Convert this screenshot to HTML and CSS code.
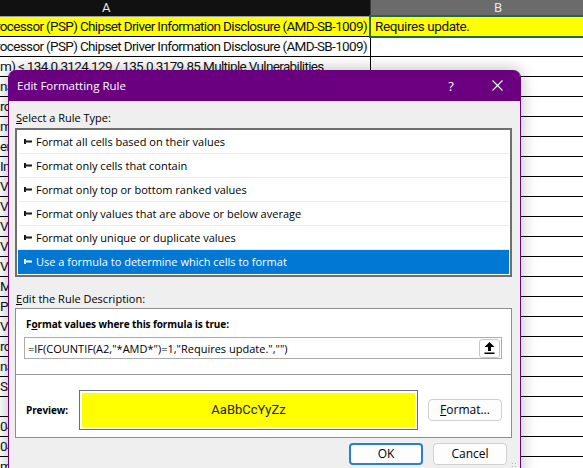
FILE: index.html
```
<!DOCTYPE html>
<html lang="en">
<head>
  <meta charset="UTF-8">
  <title>Edit Formatting Rule</title>
  <link rel="stylesheet" href="styles.css">
</head>
<body>
  <div class="sheet">
    <div class="colhead">
      <div class="hd-a">A</div>
      <div class="hd-b">B</div>
    </div>
    <div class="row hit">
      <div class="ca cut">rocessor (PSP) Chipset Driver Information Disclosure (AMD-SB-1009)</div>
      <div class="cb sel">Requires update.</div>
    </div>
    <div class="row">
      <div class="ca cut">rocessor (PSP) Chipset Driver Information Disclosure (AMD-SB-1009)</div>
      <div class="cb"></div>
    </div>
    <div class="row">
      <div class="ca">m) &lt; 134.0.3124.129 / 135.0.3179.85 Multiple Vulnerabilities</div>
      <div class="cb"></div>
    </div>
    <div class="row"><div class="ca">nal Code Execution</div><div class="cb"></div></div>
    <div class="row"><div class="ca">rocessor Vulnerability</div><div class="cb"></div></div>
    <div class="row"><div class="ca">m Update</div><div class="cb"></div></div>
    <div class="row"><div class="ca">ersion Check</div><div class="cb"></div></div>
    <div class="row"><div class="ca">Improper Input Validation</div><div class="cb"></div></div>
    <div class="row"><div class="ca">Vulnerability</div><div class="cb"></div></div>
    <div class="row"><div class="ca">Vulnerability</div><div class="cb"></div></div>
    <div class="row"><div class="ca">Vulnerability</div><div class="cb"></div></div>
    <div class="row"><div class="ca">Vulnerability</div><div class="cb"></div></div>
    <div class="row"><div class="ca">Vulnerability</div><div class="cb"></div></div>
    <div class="row"><div class="ca">Multiple Vulnerabilities</div><div class="cb"></div></div>
    <div class="row"><div class="ca">PSP Firmware</div><div class="cb"></div></div>
    <div class="row"><div class="ca">Vulnerabilities</div><div class="cb"></div></div>
    <div class="row"><div class="ca">rocessor</div><div class="cb"></div></div>
    <div class="row"><div class="ca">nal Disclosure</div><div class="cb"></div></div>
    <div class="row"><div class="ca">SMB Server</div><div class="cb"></div></div>
    <div class="row"><div class="ca"></div><div class="cb"></div></div>
    <div class="row"><div class="ca">04 Update</div><div class="cb"></div></div>
    <div class="row"><div class="ca">04 Update</div><div class="cb"></div></div>
    <div class="row"><div class="ca">m Update</div><div class="cb"></div></div>
  </div>

  <div class="dialog">
    <div class="titlebar">
      <span class="title">Edit Formatting Rule</span>
      <span class="tb-btn help">?</span>
      <span class="tb-btn close">
        <svg width="11" height="11" viewBox="0 0 11 11"><path d="M0.5 0.5L10.5 10.5M10.5 0.5L0.5 10.5" stroke="#fff" stroke-width="1.1" fill="none"/></svg>
      </span>
    </div>

    <div class="dlg-body">
      <div class="label"><u>S</u>elect a Rule Type:</div>
      <ul class="rules">
        <li><svg class="mark" width="8" height="5" viewBox="0 0 8 5"><path d="M0 0h2v1.5h6v2H2V5H0z"/></svg>Format all cells based on their values</li>
        <li><svg class="mark" width="8" height="5" viewBox="0 0 8 5"><path d="M0 0h2v1.5h6v2H2V5H0z"/></svg>Format only cells that contain</li>
        <li><svg class="mark" width="8" height="5" viewBox="0 0 8 5"><path d="M0 0h2v1.5h6v2H2V5H0z"/></svg>Format only top or bottom ranked values</li>
        <li><svg class="mark" width="8" height="5" viewBox="0 0 8 5"><path d="M0 0h2v1.5h6v2H2V5H0z"/></svg>Format only values that are above or below average</li>
        <li><svg class="mark" width="8" height="5" viewBox="0 0 8 5"><path d="M0 0h2v1.5h6v2H2V5H0z"/></svg>Format only unique or duplicate values</li>
        <li class="current"><svg class="mark" width="8" height="5" viewBox="0 0 8 5"><path d="M0 0h2v1.5h6v2H2V5H0z"/></svg>Use a formula to determine which cells to format</li>
      </ul>

      <div class="label label-edit"><u>E</u>dit the Rule Description:</div>
      <div class="desc">
        <div class="desc-top">
          <div class="bold">F<u>o</u>rmat values where this formula is true:</div>
          <div class="formula">
            <span class="formula-text">=IF(COUNTIF(A2,"*AMD*")=1,"Requires update.","")</span>
            <span class="ref-btn">
              <svg width="11" height="12" viewBox="0 0 11 12"><path d="M5.5 0L10.5 5H7V9H4V5H0.5Z M0.5 10.5h10V12h-10z" fill="#000"/></svg>
            </span>
          </div>
        </div>
        <div class="desc-bottom">
          <span class="bold pv-label">Preview:</span>
          <div class="preview"><div class="swatch">AaBbCcYyZz</div></div>
          <span class="btn fmt-btn"><u>F</u>ormat...</span>
        </div>
      </div>

      <div class="actions">
        <span class="btn ok">OK</span>
        <span class="btn">Cancel</span>
      </div>
    </div>
    <div class="grip"></div>
  </div>
</body>
</html>
```

FILE: styles.css
```
* {
  margin: 0;
  padding: 0;
  box-sizing: border-box;
}
body {
  position: relative;
  width: 583px;
  height: 468px;
  overflow: hidden;
  background: #fff;
  font-family: Roboto, "Liberation Sans", sans-serif;
}

/* spreadsheet behind the dialog */
.sheet {
  font-size: 13.5px;
  letter-spacing: -0.65px;
  color: #111;
}
.colhead {
  display: flex;
  height: 17px;
  border-bottom: 1px solid #9c9c9c;
  color: #e8e8e8;
  font-size: 13px;
  letter-spacing: 0;
  line-height: 16px;
}
.hd-a {
  width: 371px;
  padding-left: 102px;
  background: #111;
  border-right: 1px solid #3a3a3a;
}
.hd-b {
  flex: 1;
  padding-left: 123px;
  background: #6b6b6b;
}
.row {
  display: flex;
  height: 20px;
  border-bottom: 1px solid #000;
  line-height: 19px;
}
.ca {
  width: 371px;
  border-right: 1px solid #000;
  white-space: nowrap;
  overflow: hidden;
}
.ca.cut {
  text-indent: -4px;
}
.cb {
  flex: 1;
  padding-left: 4px;
  white-space: nowrap;
  letter-spacing: -0.4px;
}
.row.hit .ca,
.row.hit .cb {
  background: #ffff00;
}
.cb.sel {
  position: relative;
}
.cb.sel:after {
  content: "";
  position: absolute;
  left: -2px;
  top: -2px;
  right: -2px;
  bottom: -2px;
  border: 2px solid #1f6b40;
}

/* dialog */
.dialog {
  position: absolute;
  left: 8px;
  top: 70px;
  width: 513px;
  height: 410px;
  background: #efefef;
  border-left: 1px solid #6a0080;
  border-right: 1px solid #6a0080;
  border-radius: 8px 8px 0 0;
  box-shadow: 0 0 16px rgba(0, 0, 0, 0.28);
  font-family: "Open Sans", "Noto Sans", sans-serif;
  font-size: 11px;
  color: #000;
}
.titlebar {
  display: flex;
  align-items: center;
  height: 31px;
  background: #6a0080;
  border-radius: 7px 7px 0 0;
  color: #fff;
}
.title {
  padding-left: 8px;
  font-size: 11.5px;
  flex: 1;
}
.tb-btn {
  width: 46px;
  text-align: center;
  font-size: 13px;
}
.tb-btn svg {
  display: block;
  margin: 0 auto;
}
.dlg-body {
  padding: 9px 8px 0 6px;
}
.label {
  line-height: 16px;
  padding-left: 1px;
}
.label-edit {
  margin-top: 14px;
}
.rules {
  list-style: none;
  margin-top: 2px;
  width: 497px;
  height: 149px;
  padding: 0 1px;
  background: #fff;
  border: 2px solid #6f6f6f;
}
.rules li {
  display: flex;
  align-items: center;
  height: 24px;
  padding-left: 6px;
  border-bottom: 1px solid #ececec;
  white-space: nowrap;
}
.rules li .mark {
  margin-right: 4px;
  fill: #1a1a1a;
}
.rules li.current {
  background: #0078d4;
  color: #fff;
  border-bottom-color: #0078d4;
}
.rules li.current .mark {
  fill: #fff;
}

.desc {
  margin-top: 1px;
  width: 497px;
  height: 130px;
  background: #fff;
  border: 1px solid #8e8e8e;
}
.bold {
  font-weight: bold;
  font-size: 10px;
  letter-spacing: -0.1px;
}
.desc-top {
  padding: 7px 9px 15px 8px;
  border-bottom: 1px solid #9a9a9a;
}
.desc-top .bold {
  line-height: 16px;
  padding-left: 2px;
}
.formula {
  display: flex;
  align-items: center;
  margin-top: 5px;
  height: 22px;
  padding: 0 1px 0 3px;
  border: 1px solid #ababab;
  font-size: 11px;
}
.formula-text {
  flex: 1;
}
.ref-btn {
  display: flex;
  align-items: center;
  justify-content: center;
  width: 21px;
  height: 19px;
  background: #fff;
  border: 1px solid #c8c8c8;
  border-radius: 3px;
}
.desc-bottom {
  display: flex;
  align-items: center;
  padding: 15px 0 0 10px;
}
.pv-label {
  width: 53px;
}
.preview {
  width: 339px;
  height: 40px;
  padding: 2px;
  background: #fff;
  border: 1px solid #6e6e6e;
}
.swatch {
  height: 100%;
  background: #ffff00;
  text-align: center;
  line-height: 34px;
  font-family: Roboto, sans-serif;
  font-size: 13px;
  color: #222;
}
.btn {
  display: inline-block;
  width: 74px;
  height: 22px;
  line-height: 20px;
  text-align: center;
  background: #fdfdfd;
  border: 1px solid #d0d0d0;
  border-radius: 4px;
  font-size: 12px;
}
.fmt-btn {
  margin-left: 10px;
}
.actions {
  display: flex;
  justify-content: flex-end;
  gap: 10px;
  margin-top: 5px;
  padding-right: 5px;
}
.btn.ok {
  border: 2px solid #2b7fd3;
  line-height: 18px;
}
.grip {
  position: absolute;
  right: 3px;
  bottom: 12px;
  width: 6px;
  height: 6px;
  background-image: radial-gradient(circle, #b5b5b5 0.8px, transparent 1px);
  background-size: 3px 3px;
}
```
